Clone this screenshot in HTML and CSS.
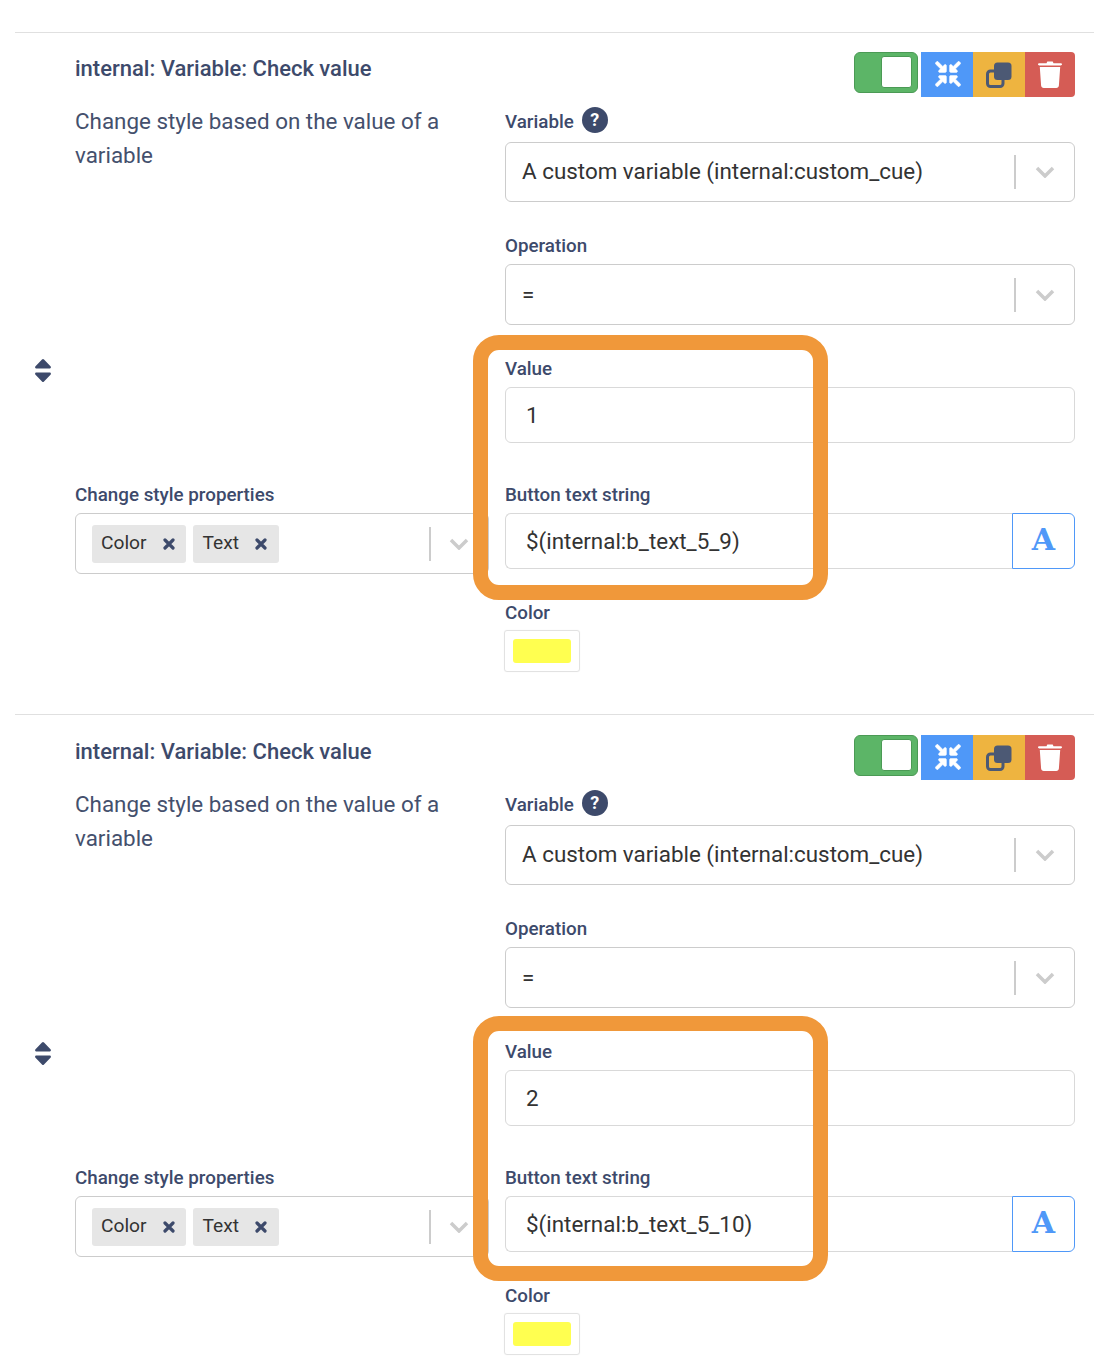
FILE: index.html
```html
<!DOCTYPE html>
<html lang="en">
<head>
    <meta charset="UTF-8">
    <meta name="viewport" content="width=device-width, initial-scale=1.0">
    <title>Variable check actions</title>
    <link rel="stylesheet" href="styles.css">
</head>
<body>

<div class="panel">
    <div class="handle">
        <svg width="16" height="23" viewBox="0 0 16 23"><path fill="#3d4a6b" d="M7 .6a1.400 1.400 0 0 1 2 0l6.500 6.700c.9.9.3 2.200-1 2.200H1.500c-1.300 0-1.900-1.300-1-2.200zM7 22.400a1.400 1.400 0 0 0 2 0l6.500-6.700c.9-.9.3-2.200-1-2.200H1.500c-1.300 0-1.900 1.300-1 2.200z"/></svg>
    </div>
    <div class="panel-body">
        <div class="panel-head">
            <div class="panel-title">internal: Variable: Check value</div>
            <div class="actions">
                <div class="toggle"><span class="toggle-knob"></span></div>
                <div class="btn btn-blue">
                    <svg width="26" height="26" viewBox="-6 -6 524 524"><path fill="#fff" stroke="#fff" stroke-width="10" d="M200 288H88c-21.4 0-32.1 25.8-17 41l32.9 31-99.2 99.3c-6.2 6.2-6.2 16.4 0 22.6l25.4 25.4c6.2 6.2 16.4 6.2 22.6 0L152 408l31.1 33c15.1 15.1 40.9 4.4 40.9-17V312c0-13.3-10.7-24-24-24zm112-64h112c21.4 0 32.1-25.9 17-41l-33-31 99.3-99.3c6.2-6.2 6.2-16.4 0-22.6L481.9 4.7c-6.2-6.2-16.4-6.2-22.6 0L360 104l-31.1-33C313.8 55.9 288 66.6 288 88v112c0 13.3 10.7 24 24 24zm96 136l33-31.1c15.1-15.1 4.4-40.9-17-40.9H312c-13.3 0-24 10.7-24 24v112c0 21.4 25.9 32.1 41 17l31-32.9 99.3 99.3c6.2 6.2 16.4 6.2 22.6 0l25.4-25.4c6.2-6.2 6.2-16.4 0-22.6L408 360zM183 71.1L152 104 52.7 4.7c-6.2-6.2-16.4-6.2-22.6 0L4.7 30.1c-6.2 6.2-6.2 16.4 0 22.6L104 152l-33 31.1C55.9 198.2 66.6 224 88 224h112c13.3 0 24-10.7 24-24V88c0-21.3-25.9-32-41-16.9z"/></svg>
                </div>
                <div class="btn btn-orange">
                    <svg width="26" height="26" viewBox="0 0 26 26"><rect x="1.5" y="9" width="15.5" height="15.5" rx="3" fill="none" stroke="#4c5974" stroke-width="3"/><rect x="8" y="0.5" width="17.5" height="17.5" rx="3.5" fill="#4c5974"/></svg>
                </div>
                <div class="btn btn-red">
                    <svg width="24" height="27" viewBox="0 0 24 27"><path fill="#fff" d="M8.5 2.200 9.300.6h5.400l.8 1.600h7.200c.7 0 1.300.5 1.300 1.100s-.6 1.100-1.300 1.100H1.300C.6 4.400 0 3.900 0 3.300s.6-1.100 1.300-1.100zM1.800 6h20.400l-1.300 18.500c-.1 1.400-1.200 2.500-2.600 2.500H5.700c-1.400 0-2.500-1.100-2.600-2.500z"/></svg>
                </div>
            </div>
        </div>
        <div class="columns">
            <div class="col-left">
                <p class="description">Change style based on the value of a variable</p>
                <div class="props-group">
                    <label class="field-label">Change style properties</label>
                    <div class="select select-multi">
                        <div class="select-value">
                            <span class="chip">Color<svg class="chip-x" width="12" height="12" viewBox="0 0 12 12"><path d="M2 2l8 8M10 2l-8 8" stroke="#3d4a6b" stroke-width="3.200" stroke-linecap="round"/></svg></span>
                            <span class="chip">Text<svg class="chip-x" width="12" height="12" viewBox="0 0 12 12"><path d="M2 2l8 8M10 2l-8 8" stroke="#3d4a6b" stroke-width="3.200" stroke-linecap="round"/></svg></span>
                        </div>
                        <span class="select-sep"></span>
                        <svg class="select-arrow" width="20" height="12" viewBox="0 0 20 12"><path d="M2 2l8 8 8-8" fill="none" stroke="#ccc" stroke-width="3.500"/></svg>
                    </div>
                </div>
            </div>
            <div class="col-right">
                <label class="field-label label-help">Variable <span class="help">?</span></label>
                <div class="select">
                    <div class="select-value">A custom variable (internal:custom_cue)</div>
                    <span class="select-sep"></span>
                    <svg class="select-arrow" width="20" height="12" viewBox="0 0 20 12"><path d="M2 2l8 8 8-8" fill="none" stroke="#ccc" stroke-width="3.500"/></svg>
                </div>
                <label class="field-label label-operation">Operation</label>
                <div class="select select-tall">
                    <div class="select-value">=</div>
                    <span class="select-sep"></span>
                    <svg class="select-arrow" width="20" height="12" viewBox="0 0 20 12"><path d="M2 2l8 8 8-8" fill="none" stroke="#ccc" stroke-width="3.500"/></svg>
                </div>
                <label class="field-label label-value">Value</label>
                <input class="text-input" type="text" value="1">
                <label class="field-label label-gap-lg">Button text string</label>
                <div class="input-group">
                    <input class="text-input" type="text" value="$(internal:b_text_5_9)">
                    <div class="font-btn">A</div>
                </div>
                <label class="field-label label-gap-sm">Color</label>
                <div class="swatch"><span class="swatch-fill"></span></div>
            </div>
        </div>
    </div>
    <div class="highlight"></div>
</div>

<div class="panel panel-second">
    <div class="handle">
        <svg width="16" height="23" viewBox="0 0 16 23"><path fill="#3d4a6b" d="M7 .6a1.400 1.400 0 0 1 2 0l6.500 6.700c.9.9.3 2.200-1 2.200H1.500c-1.300 0-1.900-1.300-1-2.200zM7 22.400a1.400 1.400 0 0 0 2 0l6.500-6.700c.9-.9.3-2.200-1-2.200H1.500c-1.300 0-1.900 1.300-1 2.200z"/></svg>
    </div>
    <div class="panel-body">
        <div class="panel-head">
            <div class="panel-title">internal: Variable: Check value</div>
            <div class="actions">
                <div class="toggle"><span class="toggle-knob"></span></div>
                <div class="btn btn-blue">
                    <svg width="26" height="26" viewBox="-6 -6 524 524"><path fill="#fff" stroke="#fff" stroke-width="10" d="M200 288H88c-21.4 0-32.1 25.8-17 41l32.9 31-99.2 99.3c-6.2 6.2-6.2 16.4 0 22.6l25.4 25.4c6.2 6.2 16.4 6.2 22.6 0L152 408l31.1 33c15.1 15.1 40.9 4.4 40.9-17V312c0-13.3-10.7-24-24-24zm112-64h112c21.4 0 32.1-25.9 17-41l-33-31 99.3-99.3c6.2-6.2 6.2-16.4 0-22.6L481.9 4.7c-6.2-6.2-16.4-6.2-22.6 0L360 104l-31.1-33C313.8 55.9 288 66.6 288 88v112c0 13.3 10.7 24 24 24zm96 136l33-31.1c15.1-15.1 4.4-40.9-17-40.9H312c-13.3 0-24 10.7-24 24v112c0 21.4 25.9 32.1 41 17l31-32.9 99.3 99.3c6.2 6.2 16.4 6.2 22.6 0l25.4-25.4c6.2-6.2 6.2-16.4 0-22.6L408 360zM183 71.1L152 104 52.7 4.7c-6.2-6.2-16.4-6.2-22.6 0L4.7 30.1c-6.2 6.2-6.2 16.4 0 22.6L104 152l-33 31.1C55.9 198.2 66.6 224 88 224h112c13.3 0 24-10.7 24-24V88c0-21.3-25.9-32-41-16.9z"/></svg>
                </div>
                <div class="btn btn-orange">
                    <svg width="26" height="26" viewBox="0 0 26 26"><rect x="1.5" y="9" width="15.5" height="15.5" rx="3" fill="none" stroke="#4c5974" stroke-width="3"/><rect x="8" y="0.5" width="17.5" height="17.5" rx="3.5" fill="#4c5974"/></svg>
                </div>
                <div class="btn btn-red">
                    <svg width="24" height="27" viewBox="0 0 24 27"><path fill="#fff" d="M8.5 2.200 9.300.6h5.400l.8 1.600h7.200c.7 0 1.300.5 1.300 1.100s-.6 1.100-1.300 1.100H1.300C.6 4.400 0 3.900 0 3.300s.6-1.100 1.300-1.100zM1.800 6h20.400l-1.300 18.500c-.1 1.400-1.200 2.500-2.600 2.500H5.700c-1.400 0-2.500-1.100-2.600-2.500z"/></svg>
                </div>
            </div>
        </div>
        <div class="columns">
            <div class="col-left">
                <p class="description">Change style based on the value of a variable</p>
                <div class="props-group">
                    <label class="field-label">Change style properties</label>
                    <div class="select select-multi">
                        <div class="select-value">
                            <span class="chip">Color<svg class="chip-x" width="12" height="12" viewBox="0 0 12 12"><path d="M2 2l8 8M10 2l-8 8" stroke="#3d4a6b" stroke-width="3.200" stroke-linecap="round"/></svg></span>
                            <span class="chip">Text<svg class="chip-x" width="12" height="12" viewBox="0 0 12 12"><path d="M2 2l8 8M10 2l-8 8" stroke="#3d4a6b" stroke-width="3.200" stroke-linecap="round"/></svg></span>
                        </div>
                        <span class="select-sep"></span>
                        <svg class="select-arrow" width="20" height="12" viewBox="0 0 20 12"><path d="M2 2l8 8 8-8" fill="none" stroke="#ccc" stroke-width="3.500"/></svg>
                    </div>
                </div>
            </div>
            <div class="col-right">
                <label class="field-label label-help">Variable <span class="help">?</span></label>
                <div class="select">
                    <div class="select-value">A custom variable (internal:custom_cue)</div>
                    <span class="select-sep"></span>
                    <svg class="select-arrow" width="20" height="12" viewBox="0 0 20 12"><path d="M2 2l8 8 8-8" fill="none" stroke="#ccc" stroke-width="3.500"/></svg>
                </div>
                <label class="field-label label-operation">Operation</label>
                <div class="select select-tall">
                    <div class="select-value">=</div>
                    <span class="select-sep"></span>
                    <svg class="select-arrow" width="20" height="12" viewBox="0 0 20 12"><path d="M2 2l8 8 8-8" fill="none" stroke="#ccc" stroke-width="3.500"/></svg>
                </div>
                <label class="field-label label-value">Value</label>
                <input class="text-input" type="text" value="2">
                <label class="field-label label-gap-lg">Button text string</label>
                <div class="input-group">
                    <input class="text-input" type="text" value="$(internal:b_text_5_10)">
                    <div class="font-btn">A</div>
                </div>
                <label class="field-label label-gap-sm">Color</label>
                <div class="swatch"><span class="swatch-fill"></span></div>
            </div>
        </div>
    </div>
    <div class="highlight"></div>
</div>

</body>
</html>
```

FILE: styles.css
```css
body {
    font-family: Roboto, Arial, sans-serif;
    background-color: #fff;
    margin: 0;
    padding: 32px 20px 0 15px;
    overflow: hidden;
}
.panel {
    position: relative;
    display: flex;
    height: 682px;
    box-sizing: border-box;
    border-top: 1px solid #e0e0e0;
}
.handle {
    width: 60px;
    flex-shrink: 0;
    padding: 0 5px 6px 0;
    box-sizing: border-box;
    display: flex;
    align-items: center;
    justify-content: center;
}
.panel-second .handle {
    padding-bottom: 4px;
}
.panel-body {
    flex: 1;
    padding-right: 19px;
}
.panel-head {
    display: flex;
    justify-content: space-between;
    padding-top: 19px;
}
.panel-second .panel-head {
    padding-top: 20px;
}
.panel-title {
    font-size: 22px;
    font-weight: 500;
    line-height: 34px;
    color: #3d4a6b;
}
.actions {
    display: flex;
    align-items: flex-start;
}
.toggle {
    width: 64px;
    height: 41px;
    box-sizing: border-box;
    margin-right: 3px;
    padding: 3px 5px 3px 3px;
    background-color: #5cb567;
    border: 1px solid #4b9a55;
    border-radius: 6px;
    display: flex;
    justify-content: flex-end;
}
.toggle-knob {
    width: 31px;
    height: 32px;
    box-sizing: border-box;
    background-color: #fff;
    border: 1px solid #4b9a55;
    border-radius: 3px;
}
.btn {
    width: 52px;
    height: 45px;
    display: flex;
    align-items: center;
    justify-content: center;
}
.btn-blue {
    background-color: #4f98f8;
}
.btn-blue svg {
    margin: 0 0 1px 1px;
}
.btn-orange {
    background-color: #eeb440;
}
.btn-red {
    width: 50px;
    background-color: #d55c55;
    border-radius: 0 4px 4px 0;
}
.columns {
    display: flex;
    gap: 16px;
    margin-top: 8px;
}
.col-left {
    width: 414px;
    flex-shrink: 0;
    display: flex;
    flex-direction: column;
}
.col-right {
    flex: 1;
    min-width: 0;
}
.description {
    max-width: 400px;
    margin: -1px 0 0;
    font-size: 22.4px;
    line-height: 34px;
    color: #44506d;
}
.props-group {
    margin-top: auto;
    padding-bottom: 98px;
}
.field-label {
    display: block;
    height: 24px;
    margin-bottom: 7px;
    font-size: 18.8px;
    font-weight: 500;
    line-height: 26px;
    color: #3d4a6b;
}
.label-help {
    display: flex;
    align-items: flex-start;
    gap: 8px;
    height: 26px;
    margin-top: 2px;
    margin-bottom: 9px;
    line-height: 30px;
}
.help {
    width: 26px;
    height: 26px;
    border-radius: 50%;
    background-color: #3d4a6b;
    color: #fff;
    font-size: 18px;
    font-weight: 700;
    line-height: 26px;
    text-align: center;
}
.label-operation {
    margin-top: 32px;
    margin-bottom: 6px;
    line-height: 24px;
}
.label-value {
    margin-top: 31px;
}
.label-gap-lg {
    margin-top: 39px;
}
.label-gap-sm {
    margin-top: 31px;
    margin-bottom: 6px;
}
.select {
    height: 60px;
    box-sizing: border-box;
    display: flex;
    align-items: center;
    border: 1px solid #ccc;
    border-radius: 6px;
    background-color: #fff;
}
.select-tall, .select-multi {
    height: 61px;
}
.select-value {
    flex: 1;
    padding: 0 0 2px 16px;
    font-size: 22.4px;
    color: #333;
    display: flex;
    gap: 7px;
}
.select-multi .select-value {
    padding-bottom: 0;
}
.select-sep {
    width: 2px;
    height: 34px;
    background-color: #ccc;
}
.select-arrow {
    margin: 0 19px;
}
.select-multi .select-arrow {
    margin-left: 18px;
}
.chip {
    display: flex;
    align-items: center;
    height: 38px;
    box-sizing: border-box;
    padding: 0 11px 2px 9px;
    font-size: 19.2px;
    color: #333;
    background-color: #e6e6e6;
    border-radius: 3px;
}
.chip + .chip {
    padding: 0 12px 2px 10px;
}
.chip-x {
    margin: 2px 0 0 16px;
}
.text-input {
    display: block;
    width: 100%;
    height: 56px;
    box-sizing: border-box;
    padding: 0 20px;
    font-family: inherit;
    font-size: 22.4px;
    color: #333;
    border: 1px solid #d9d9d9;
    border-radius: 6px;
    outline: none;
}
.input-group {
    display: flex;
}
.input-group .text-input {
    flex: 1;
    border-right: 0;
    border-radius: 6px 0 0 6px;
}
.font-btn {
    width: 63px;
    box-sizing: border-box;
    border: 1px solid #4f98f8;
    border-radius: 0 6px 6px 0;
    font-family: "DejaVu Serif", serif;
    font-size: 30px;
    font-weight: 700;
    line-height: 52px;
    text-align: center;
    color: #4f98f8;
}
.swatch {
    width: 76px;
    height: 42px;
    box-sizing: border-box;
    margin-left: -1px;
    padding: 8px;
    border: 1px solid #e2e2e2;
    border-radius: 3px;
    box-shadow: 0 0 1px rgba(0, 0, 0, 0.1);
}
.swatch-fill {
    display: block;
    height: 100%;
    background-color: #ffff50;
    border-radius: 3px;
}
.highlight {
    position: absolute;
    left: 458px;
    top: 302px;
    width: 355px;
    height: 265px;
    box-sizing: border-box;
    border: 15px solid #f0983a;
    border-radius: 26px;
}
.panel-second .highlight {
    top: 301px;
}
```
